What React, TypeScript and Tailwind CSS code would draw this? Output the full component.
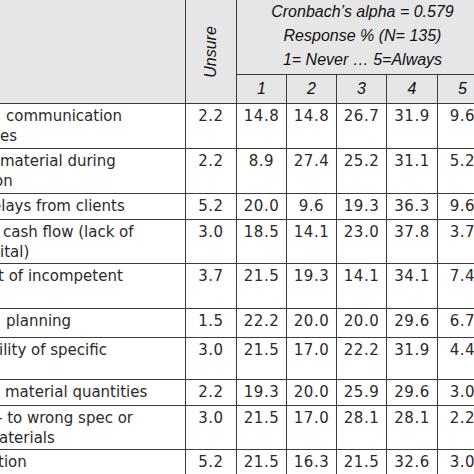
import React from "react";

type Row = { lines: { t: string; c: string }[]; u: string; v: string[] };

const rows: Row[] = [
  { lines: [{ t: "communication", c: "ml-[6px]" }, { t: "es", c: "ml-0" }], u: "2.2", v: ["14.8", "14.8", "26.7", "31.9", "9.6"] },
  { lines: [{ t: "material during", c: "ml-0" }, { t: "on", c: "-ml-[6px]" }], u: "2.2", v: ["8.9", "27.4", "25.2", "31.1", "5.2"] },
  { lines: [{ t: "elays from clients", c: "-ml-[8px]" }], u: "5.2", v: ["20.0", "9.6", "19.3", "36.3", "9.6"] },
  { lines: [{ t: "cash flow (lack of", c: "ml-[3px]" }, { t: "ital)", c: "ml-0" }], u: "3.0", v: ["18.5", "14.1", "23.0", "37.8", "3.7"] },
  { lines: [{ t: "t of incompetent", c: "-ml-[2px]" }], u: "3.7", v: ["21.5", "19.3", "14.1", "34.1", "7.4"] },
  { lines: [{ t: "planning", c: "ml-[6px]" }], u: "1.5", v: ["22.2", "20.0", "20.0", "29.6", "6.7"] },
  { lines: [{ t: "ility of specific", c: "-ml-[1px]" }], u: "3.0", v: ["21.5", "17.0", "22.2", "31.9", "4.4"] },
  { lines: [{ t: "material quantities", c: "ml-[5px]" }], u: "2.2", v: ["19.3", "20.0", "25.9", "29.6", "3.0"] },
  { lines: [{ t: "- to wrong spec or", c: "-ml-[3px]" }, { t: "aterials", c: "-ml-[1px]" }], u: "3.0", v: ["21.5", "17.0", "28.1", "28.1", "2.2"] },
  { lines: [{ t: "tion", c: "-ml-[2px]" }], u: "5.2", v: ["21.5", "16.3", "21.5", "32.6", "3.0"] },
];

const line = "border-r border-b border-[#3c3c3c]";
const head = "bg-[#e6e6e7] font-['Liberation_Sans',Arial,sans-serif] italic text-[16px] text-[#111]";
const cell = `${line} pt-[2px] text-center text-[15px] leading-[20px] tracking-[0.5px] font-['DejaVu_Sans',sans-serif]`;

export default function App() {
  return (
    <div className="w-[474px] h-[474px] overflow-hidden bg-white text-[#2a2a2a]">
      <div className="grid w-[488px] grid-cols-[186px_51px_50px_50px_50px_51px_50px] grid-rows-[75px_29px_45px_45px_26px_44px_45px_29px_42px_26px_44px_45px]">
        {/* header */}
        <div className={`row-span-2 ${head} ${line}`} />
        <div className={`row-span-2 ${head} ${line} flex items-center justify-center`}>
          <span className="-rotate-90 whitespace-nowrap">Unsure</span>
        </div>
        <div className={`col-span-5 ${head} border-b border-[#3c3c3c] flex flex-col items-center leading-[24px]`}>
          <div>Cronbach’s alpha = 0.579</div>
          <div>Response % (N= 135)</div>
          <div>1= Never … 5=Always</div>
        </div>
        {["1", "2", "3", "4", "5"].map((n) => (
          <div key={n} className={`${head} ${line} flex items-center justify-center`}>
            {n}
          </div>
        ))}
        {/* body */}
        {rows.map((r, i) => (
          <React.Fragment key={i}>
            <div className={`${line} overflow-hidden pt-[2px] text-[15px] leading-[20px] font-['DejaVu_Sans',sans-serif]`}>
              {r.lines.map((l, j) => (
                <div key={j} className={`whitespace-nowrap ${l.c}`}>
                  {l.t}
                </div>
              ))}
            </div>
            <div className={cell}>{r.u}</div>
            {r.v.map((v, k) => (
              <div key={k} className={cell}>
                {v}
              </div>
            ))}
          </React.Fragment>
        ))}
      </div>
    </div>
  );
}
